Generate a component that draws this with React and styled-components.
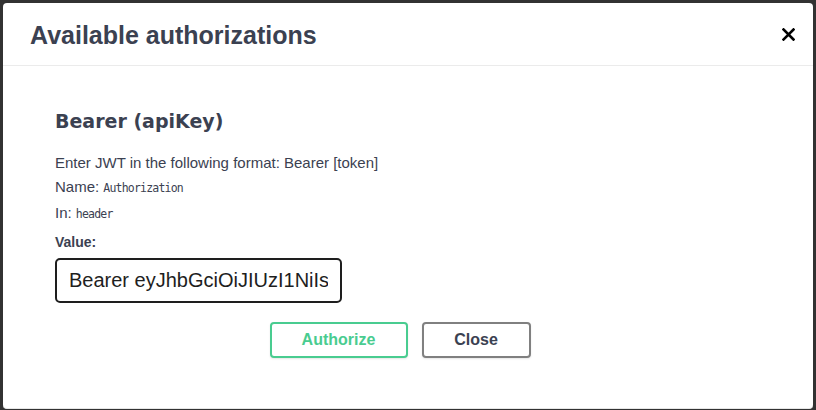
import React from "react";
import styled, { createGlobalStyle } from "styled-components";

const Global = createGlobalStyle`
  html, body { margin: 0; padding: 0; background: #323232; }
  body { font-family: "Liberation Sans", Arial, sans-serif; }
`;

const Backdrop = styled.div`
  width: 816px;
  height: 410px;
  padding: 3px 3px 0 3px;
  box-sizing: border-box;
  background: #323232;
  overflow: hidden;
`;

const Modal = styled.div`
  background: #fff;
  border-radius: 4px;
  height: 406px;
  box-sizing: border-box;
  border-bottom: 1px solid #e6e6e6;
  display: flex;
  flex-direction: column;
`;

const Header = styled.div`
  display: flex;
  align-items: center;
  justify-content: space-between;
  height: 63px;
  box-sizing: border-box;
  padding: 3px 15px 0 27px;
  border-bottom: 1px solid #ebebeb;
`;

const Title = styled.h3`
  margin: 0;
  font-family: "Liberation Sans", Arial, sans-serif;
  font-weight: 700;
  font-size: 25px;
  color: #3b4151;
`;

const CloseIcon = styled.button`
  border: none;
  background: none;
  padding: 0;
  margin-top: -3px;
  width: 20px;
  height: 20px;
  display: flex;
  align-items: center;
  justify-content: center;
  cursor: pointer;
`;

const Content = styled.div`
  padding: 44px 0 0 52px;
  display: flex;
  flex-direction: column;
`;

const SchemeTitle = styled.h4`
  margin: 0 0 22px 0;
  font-family: "DejaVu Sans", sans-serif;
  font-weight: 700;
  font-size: 19px;
  color: #3b4151;
`;

const Line = styled.div`
  font-family: "Liberation Sans", Arial, sans-serif;
  font-size: 15px;
  color: #3b4151;
  line-height: 18px;
  margin-bottom: ${(p) => p.$mb || 7}px;
`;

const Code = styled.code`
  font-family: "DejaVu Sans Mono", monospace;
  font-size: 11.5px;
  letter-spacing: -0.8px;
  color: #3b4151;
`;

const Label = styled.label`
  font-family: "Liberation Sans", Arial, sans-serif;
  font-size: 14px;
  font-weight: 700;
  color: #3b4151;
  margin-bottom: 8px;
`;

const Input = styled.input`
  width: 287px;
  height: 45px;
  box-sizing: border-box;
  border: 2px solid #1e1e1e;
  border-radius: 5px;
  padding: 0 12px;
  font-family: "Liberation Sans", Arial, sans-serif;
  font-size: 20px;
  color: #1e1e1e;
  outline: none;
`;

const BtnRow = styled.div`
  display: flex;
  justify-content: center;
  gap: 14px;
  margin-top: 19px;
  margin-left: -52px;
  padding-right: 16px;
`;

const Btn = styled.button`
  height: 36px;
  width: ${(p) => p.$w}px;
  box-sizing: border-box;
  background: #fff;
  border: 2px solid ${(p) => p.$border};
  border-radius: 4px;
  color: ${(p) => p.$color};
  font-family: "Liberation Sans", Arial, sans-serif;
  font-weight: 700;
  font-size: 16px;
  cursor: pointer;
  box-shadow: 0 1px 2px rgba(0, 0, 0, 0.1);
`;

export default function App() {
  return (
    <>
      <Global />
      <Backdrop>
        <Modal>
          <Header>
            <Title>Available authorizations</Title>
            <CloseIcon aria-label="Close">
              <svg width="13" height="13" viewBox="0 0 13 13">
                <path d="M1.5 1.5 L11.5 11.5 M11.5 1.5 L1.5 11.5" stroke="#000" strokeWidth="2.6" strokeLinecap="square" />
              </svg>
            </CloseIcon>
          </Header>
          <Content>
            <SchemeTitle>Bearer (apiKey)</SchemeTitle>
            <Line $mb={6}>Enter JWT in the following format: Bearer [token]</Line>
            <Line $mb={7}>
              Name: <Code>Authorization</Code>
            </Line>
            <Line $mb={11}>
              In: <Code>header</Code>
            </Line>
            <Label>Value:</Label>
            <Input defaultValue="Bearer eyJhbGciOiJIUzI1NiIs" />
            <BtnRow>
              <Btn $w={138} $border="#49cc90" $color="#49cc90">Authorize</Btn>
              <Btn $w={109} $border="#808080" $color="#3b4151">Close</Btn>
            </BtnRow>
          </Content>
        </Modal>
      </Backdrop>
    </>
  );
}
